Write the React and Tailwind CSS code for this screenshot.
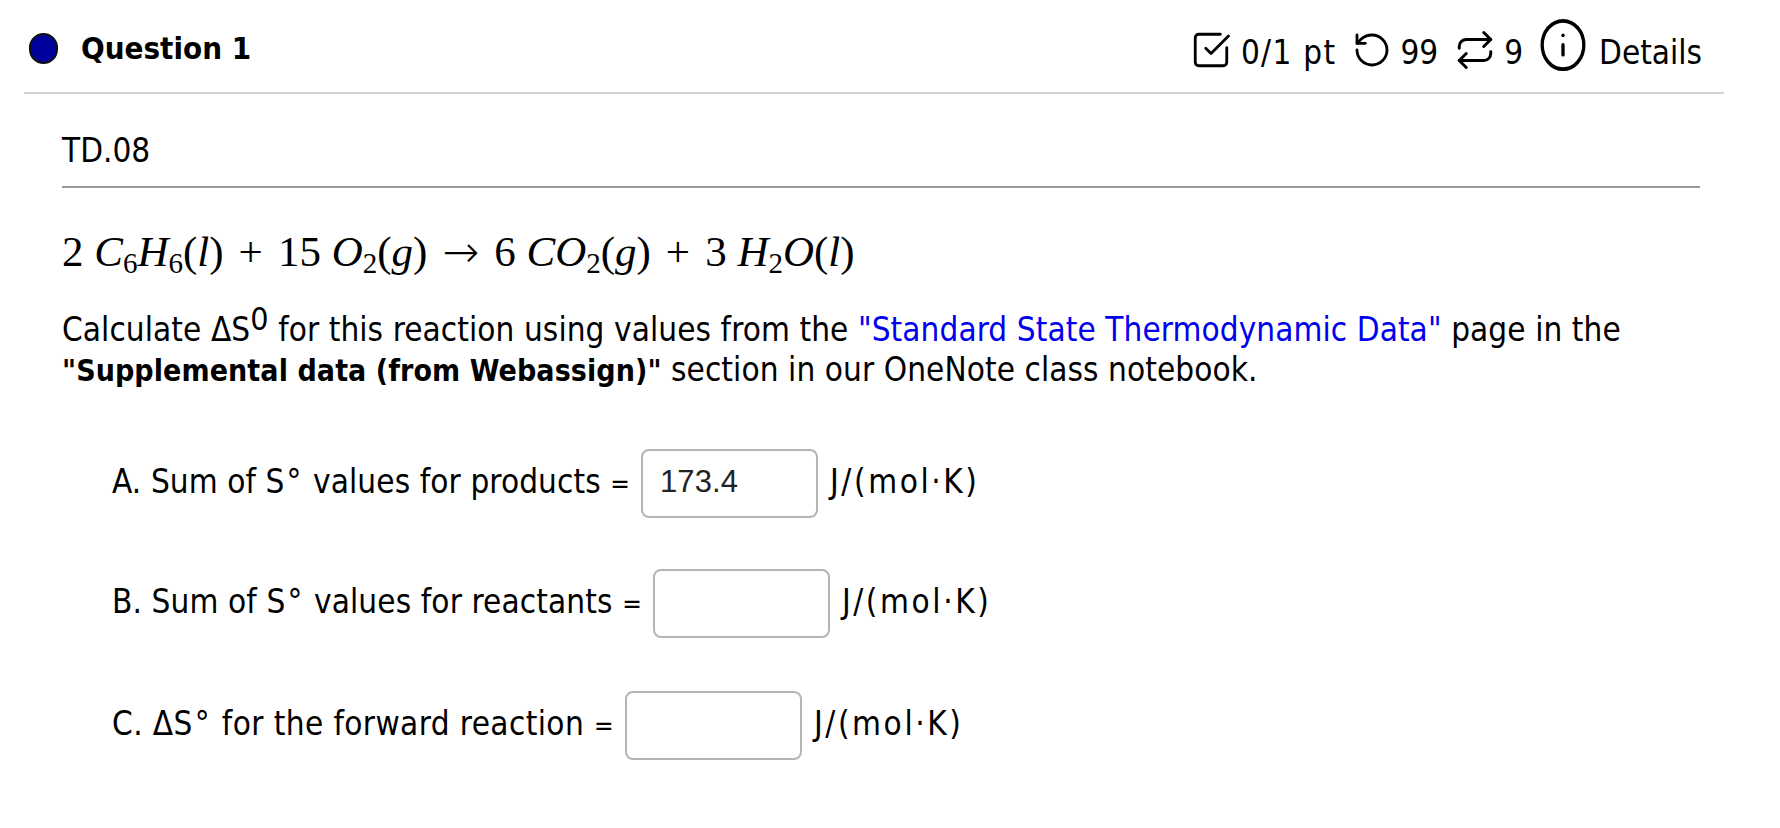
import { SquareCheckBig, RotateCcw, Repeat, Info } from "lucide-react";

const answers = [
  { before: "A. Sum of S", after: " values for products ", value: "173.4", row: "pb-[51px] tracking-[0.1px]" },
  { before: "B. Sum of S", after: " values for reactants ", value: "", row: "pb-[53px] tracking-[0.12px]" },
  { before: "C. ΔS", after: " for the forward reaction ", value: "", row: "tracking-[0.4px]" },
];

const Sub = ({ children }) => (
  <sub className="bottom-0 text-[29px] not-italic leading-[0] align-[-7px]">{children}</sub>
);

const Species = ({ coef, name, sub1, name2, sub2, state }) => (
  <span>
    {coef} <i>{name}</i>
    {sub1 && <Sub>{sub1}</Sub>}
    {name2 && <i>{name2}</i>}
    {sub2 && <Sub>{sub2}</Sub>}
    (<i>{state}</i>)
  </span>
);

const App = () => {
  return (
    <div className="min-h-[828px] bg-white text-black font-['DejaVu_Sans_Condensed','DejaVu_Sans',sans-serif] text-[33px]">
      <div className="ml-6 mr-[56px] h-[90px] mt-[4px] flex items-center justify-between border-b-2 border-[#d4d4d4]">
        <div className="flex items-center pl-[5px]">
          <span className="w-[29px] h-[31px] rounded-full bg-[#00009c] border-2 border-[#111]" />
          <span className="ml-[23px] font-bold text-[31px]">Question 1</span>
        </div>
        <div className="flex items-center mr-[22px]">
          <SquareCheckBig size={42} strokeWidth={1.6} className="mt-[4px]" />
          <span className="ml-[9px] mt-[10px] tracking-[1.3px]">0/1 pt</span>
          <RotateCcw size={40} strokeWidth={1.7} className="ml-[16px] mt-[4px]" />
          <span className="ml-[8px] mt-[10px]">99</span>
          <Repeat size={42} strokeWidth={1.7} className="ml-[16px] mt-[4px]" />
          <span className="ml-[8px] mt-[10px]">9</span>
          <Info width={50} height={58} strokeWidth={1.6} preserveAspectRatio="none" className="ml-[15px] -mt-[6px]" />
          <span className="ml-[11px] mt-[10px]">Details</span>
        </div>
      </div>

      <div className="ml-[62px] mr-[80px]">
        <div className="h-[94px] pt-[34px] leading-[46px] border-b-2 border-[#9a9a9a]">TD.08</div>
        <div className="mt-[34px] h-[60px] leading-[60px] font-['Liberation_Serif',serif] text-[43px] flex gap-[15px] whitespace-nowrap">
          <Species coef="2" name="C" sub1="6" name2="H" sub2="6" state="l" />
          <span>+</span>
          <Species coef="15" name="O" sub1="2" state="g" />
          <span className="font-['DejaVu_Sans',sans-serif] text-[44px] font-extralight">→</span>
          <Species coef="6" name="CO" sub1="2" state="g" />
          <span>+</span>
          <Species coef="3" name="H" sub1="2" name2="O" state="l" />
        </div>
        <p className="mt-[28px] leading-[40px] tracking-[0.08px]">
          Calculate ΔS<sup className="top-0 text-[32px] leading-[0] align-[11px]">0</sup> for this reaction using values
          from the <a className="text-[#0000ee]">"Standard State Thermodynamic Data"</a> page in the
          <br />
          <b className="text-[30px]">"Supplemental data (from Webassign)"</b> section in our OneNote class notebook.
        </p>
        <div className="mt-[58px] pl-[50px]">
          {answers.map((a) => (
            <div key={a.before} className={`flex items-center ${a.row}`}>
              <span className="pb-[4px] whitespace-pre">
                {a.before}
                <span className="mx-[2px]">°</span>
                {a.after}
                <span className="text-[26px]">=</span>
              </span>
              <input
                readOnly
                value={a.value}
                className="ml-[11px] w-[177px] h-[69px] px-[17px] pb-[4px] border-2 border-[#b5b5b5] rounded-[8px] font-['Liberation_Sans',sans-serif] text-[31px] text-[#222]"
              />
              <span className="ml-[12px] pb-[4px] tracking-[2.6px]">J/(mol·K)</span>
            </div>
          ))}
        </div>
      </div>
    </div>
  );
};

export default App;
